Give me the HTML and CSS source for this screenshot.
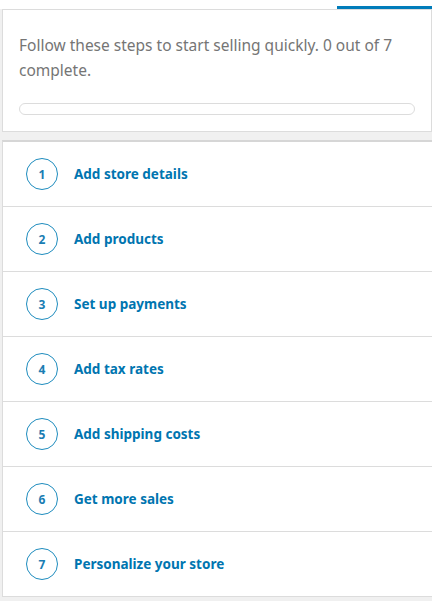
FILE: index.html
```html
<!DOCTYPE html>
<html lang="en">
<head>
<meta charset="utf-8">
<title>Store setup</title>
<link rel="stylesheet" href="styles.css">
</head>
<body>
<div class="topbar"><div class="tab-indicator"></div></div>
<div class="page">
  <section class="card">
    <p class="intro">Follow these steps to start selling quickly. 0 out of 7 complete.</p>
    <div class="progress"></div>
  </section>
  <ul class="steps">
    <li class="step"><span class="num">1</span><span class="label">Add store details</span></li>
    <li class="step"><span class="num">2</span><span class="label">Add products</span></li>
    <li class="step"><span class="num">3</span><span class="label">Set up payments</span></li>
    <li class="step"><span class="num">4</span><span class="label">Add tax rates</span></li>
    <li class="step"><span class="num">5</span><span class="label">Add shipping costs</span></li>
    <li class="step"><span class="num">6</span><span class="label">Get more sales</span></li>
    <li class="step"><span class="num">7</span><span class="label">Personalize your store</span></li>
  </ul>
</div>
</body>
</html>
```
FILE: styles.css
```css
html, body {
  margin: 0;
  padding: 0;
}
body {
  background: #f0f0f0;
  font-family: "Noto Sans", "Open Sans", sans-serif;
  height: 601px;
  overflow: hidden;
}
.topbar {
  height: 9px;
  background: #fff;
  display: flex;
  justify-content: flex-end;
}
.tab-indicator {
  width: 95px;
  height: 3px;
  margin-top: 6px;
  background: #007cba;
}
.page {
  padding-left: 2px;
  background: #f0f0f0;
}
.card {
  background: #fff;
  border: 1px solid #dcdcdc;
  padding: 23px 16px 16px 16px;
}
.intro {
  margin: 0;
  font-size: 15.5px;
  line-height: 25px;
  color: #757575;
}
.progress {
  margin-top: 20px;
  height: 10px;
  border: 1px solid #dcdcdc;
  border-radius: 6px;
  background: #fff;
}
.steps {
  list-style: none;
  margin: 8px 0 0 0;
  padding: 0;
  background: #fff;
  border-top: 2px solid #d6d6d6;
  border-left: 1px solid #dcdcdc;
}
.step {
  height: 64px;
  border-bottom: 1px solid #dcdcdc;
  display: flex;
  align-items: center;
  padding-left: 23px;
}
.num {
  width: 30px;
  height: 30px;
  border: 1px solid #1e8cbe;
  border-radius: 50%;
  display: flex;
  align-items: center;
  justify-content: center;
  font-size: 12px;
  font-weight: 700;
  color: #1a7db3;
}
.label {
  margin-left: 16px;
  font-size: 13.5px;
  font-weight: 700;
  color: #0075b0;
}
```
